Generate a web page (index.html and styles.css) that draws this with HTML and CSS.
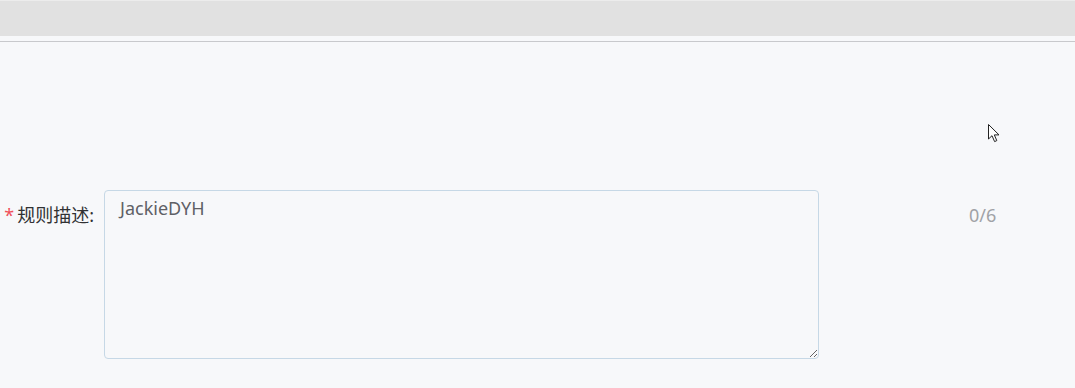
FILE: index.html
```html
<!DOCTYPE html>
<html lang="zh-CN">
<head>
<meta charset="utf-8">
<title>规则描述</title>
<link rel="stylesheet" href="styles.css">
</head>
<body>
<header class="topbar"></header>
<div class="divider"></div>
<main class="content">
  <div class="form-row">
    <label class="form-label"><span class="required">*</span>规则描述:</label>
    <div class="textarea-wrap">
      <textarea class="textarea">JackieDYH</textarea>
    </div>
    <span class="counter">0/6</span>
  </div>
  <svg class="cursor" width="14" height="21" viewBox="0 0 14 21">
    <path d="M1.5 1.5 L1.5 16 L5 12.7 L7.6 18.6 L9.8 17.6 L7.3 11.9 L12 11.9 Z" fill="#fff" stroke="#222" stroke-width="1" stroke-linejoin="miter"/>
  </svg>
</main>
</body>
</html>
```
FILE: styles.css
```css
html, body {
  margin: 0;
  padding: 0;
  background: #f7f8fa;
  font-family: "Noto Sans", "Noto Sans CJK SC", sans-serif;
}
.topbar {
  height: 35px;
  background: #e1e1e1;
  border-top: 1px solid #ececec;
}
.divider {
  margin-top: 5px;
  height: 1px;
  background: #c8c9cc;
}
.content {
  position: relative;
  height: 346px;
  padding-top: 148px;
  box-sizing: border-box;
}
.form-row {
  display: flex;
  align-items: flex-start;
}
.form-label {
  width: 94px;
  padding-right: 10px;
  box-sizing: content-box;
  display: flex;
  justify-content: flex-end;
  align-items: center;
  font-size: 18px;
  color: #303133;
  line-height: 24px;
  padding-top: 13px;
}
.required {
  color: #f0505a;
  margin-right: 3px;
  font-size: 18px;
}
.textarea-wrap {
  width: 715px;
  height: 169px;
}
.textarea {
  width: 100%;
  height: 100%;
  box-sizing: border-box;
  border: 1px solid #c6d8e6;
  border-radius: 4px;
  background: #f7f8fa;
  padding: 5px 15px;
  font-family: "Noto Sans", "Noto Sans CJK SC", sans-serif;
  font-size: 18px;
  line-height: 24px;
  color: #5e6066;
  resize: vertical;
  outline: none;
}
.counter {
  margin-left: 150px;
  padding-top: 13px;
  font-size: 18px;
  line-height: 24px;
  color: #a0a2a6;
}
.cursor {
  position: absolute;
  left: 987px;
  top: 81px;
}
```
